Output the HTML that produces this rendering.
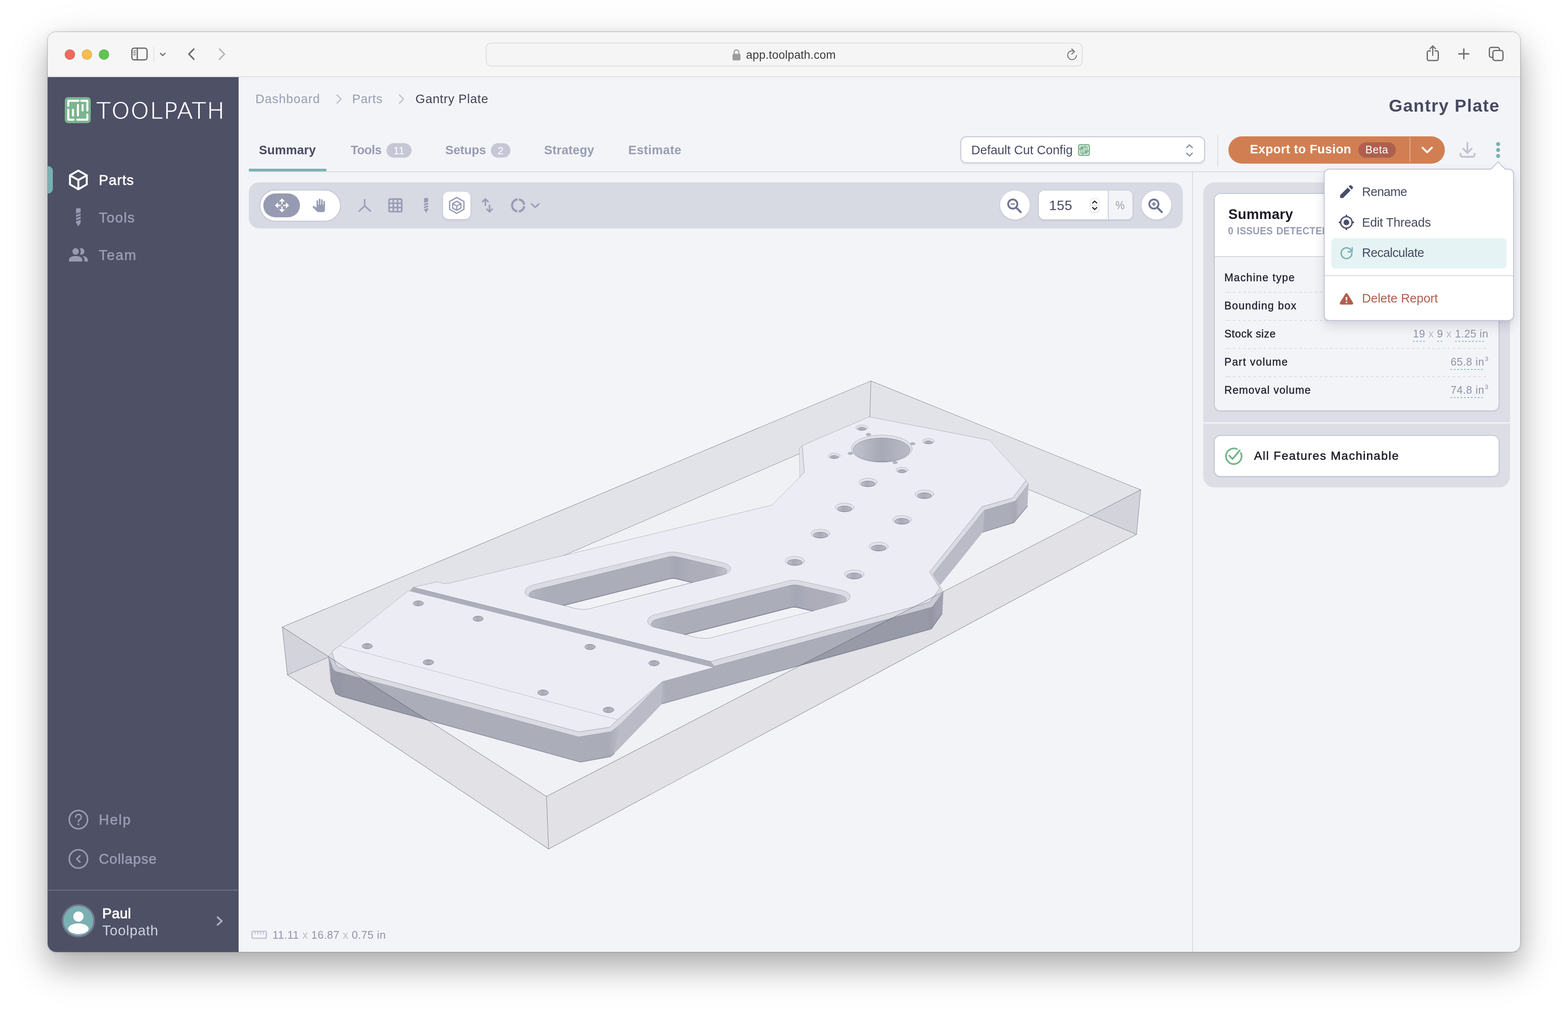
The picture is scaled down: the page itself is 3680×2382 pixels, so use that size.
<!DOCTYPE html>
<html lang="en">
<head>
<meta charset="utf-8">
<title>Toolpath - Gantry Plate</title>
<style>
*{box-sizing:border-box;margin:0;padding:0}
html,body{width:3680px;height:2382px;background:#fff;overflow:hidden}
body{position:relative;font-family:"Liberation Sans","DejaVu Sans",sans-serif;color:#43465c}
.win{position:absolute;left:112px;top:75px;width:3456px;height:2159px;border-radius:20px;overflow:hidden;background:#f3f4f7;
 box-shadow:0 0 0 1px rgba(0,0,0,.24),0 36px 70px rgba(0,0,0,.26),0 30px 120px rgba(0,0,0,.10),0 0 14px rgba(0,0,0,.08)}
.pg{position:absolute;left:-112px;top:-75px;width:3680px;height:2382px;will-change:transform}
.a{position:absolute}
.t{position:absolute;white-space:nowrap;line-height:1}
svg{position:absolute;overflow:visible}
/* browser chrome */
.chrome{left:112px;top:75px;width:3456px;height:106px;background:#f6f6f6;border-bottom:2px solid #dcdcdc}
.tl{width:24px;height:24px;border-radius:50%;top:116px}
.url{left:1140px;top:100px;width:1401px;height:56px;border-radius:13px;background:#f5f5f5;border:2px solid #dedede}
/* sidebar */
.side{left:112px;top:181px;width:448px;height:2054px;background:#4e5066}
.sb{-webkit-text-stroke:.7px currentColor}
.sb2{-webkit-text-stroke:.5px currentColor}
.nav{font-size:33px;letter-spacing:2.2px;color:#989cb3;-webkit-text-stroke:.75px currentColor}
.main{left:560px;top:181px;width:3008px;height:2054px;background:#f3f4f7}
.mut{color:#989cb3}
.tab{font-size:28px;font-weight:bold;color:#989cb3;letter-spacing:.2px}
.badge{height:34px;border-radius:17px;background:#c5c7d6;color:#fff;font-size:24.5px;text-align:center;line-height:35.5px;letter-spacing:.5px}
.row{font-size:25px;font-weight:bold;color:#1f2130;letter-spacing:1.1px}
.val{font-size:25px;color:#8f93ab;letter-spacing:.6px}
.row{font-weight:normal}
.dash{left:2874.5px;width:619px;height:2px;background:repeating-linear-gradient(90deg,#dbdce5 0,#dbdce5 6px,transparent 6px,transparent 12px);background-position:6.5px 0}
.u{padding-bottom:4.8px;background:repeating-linear-gradient(90deg,#84b8b6 0,#84b8b6 4px,transparent 4px,transparent 8px) 0 100%/100% 2.3px no-repeat}
.x{color:#b9bccd}
.val sup{font-size:15px;position:relative;top:-10.6px;vertical-align:baseline;letter-spacing:0;line-height:0;margin-left:1px}
.mi{font-size:29px;color:#474a62;letter-spacing:.1px}
</style>
</head>
<body>
<div class="win"><div class="pg">

<!-- ===== browser chrome ===== -->
<div class="a chrome"></div>
<div class="a tl" style="left:152px;background:#ee6a5f;box-shadow:inset 0 0 0 1px rgba(0,0,0,.12)"></div>
<div class="a tl" style="left:192px;background:#f5bd4f;box-shadow:inset 0 0 0 1px rgba(0,0,0,.12)"></div>
<div class="a tl" style="left:232px;background:#61c454;box-shadow:inset 0 0 0 1px rgba(0,0,0,.12)"></div>
<div class="a url"></div>
<div class="t" id="url" style="left:1751px;top:116.4px;font-size:27px;color:#3c3c3c;letter-spacing:.2px">app.toolpath.com</div>
<svg style="left:0;top:0" width="3680" height="2382" viewBox="0 0 3680 2382" fill="none" stroke-linecap="round" stroke-linejoin="round">
<!-- sidebar toggle -->
<rect x="309.5" y="113" width="35.6" height="27.6" rx="5.5" stroke="#6b6b6b" stroke-width="3"/>
<path d="M322.2 113V140.6" stroke="#6b6b6b" stroke-width="3"/>
<path d="M313.6 119.6H318M313.6 124H318M313.6 128.4H318" stroke="#6b6b6b" stroke-width="2"/>
<path d="M361 110V145.5" stroke="#e2e2e2" stroke-width="2"/>
<path d="M376.8 125.2L382 130.4L387.2 125.2" stroke="#7c7c82" stroke-width="3.2"/>
<path d="M455 115L443.2 127L455 139" stroke="#6a6a6a" stroke-width="3.4"/>
<path d="M515 115L526.8 127L515 139" stroke="#b6b6b6" stroke-width="3.4"/>
<!-- lock -->
<rect x="1719.2" y="126.2" width="18.6" height="15.6" rx="3" fill="#9c9c9c"/>
<path d="M1723 127V122.6a5.5 5.5 0 0 1 11 0V127" stroke="#9c9c9c" stroke-width="2.6"/>
<!-- reload -->
<path d="M2521.5 120.9A10.3 10.3 0 1 0 2526.4 130.3" stroke="#757575" stroke-width="2.2"/>
<path d="M2515.4 115L2521.7 120.9L2515.4 126.8" stroke="#757575" stroke-width="2.4"/>
<!-- share -->
<path d="M3357 119.3H3353.7a4 4 0 0 0 -4 4V138a4 4 0 0 0 4 4H3371.5a4 4 0 0 0 4 -4V123.3a4 4 0 0 0 -4 -4H3368.2" stroke="#6e6e6e" stroke-width="3"/>
<path d="M3362.6 130V108.4M3356.2 114.2L3362.6 107.8L3369 114.2" stroke="#6e6e6e" stroke-width="2.8"/>
<!-- plus -->
<path d="M3423.8 126.4H3447.2M3435.5 114.8V138" stroke="#6e6e6e" stroke-width="3.2"/>
<!-- tabs -->
<path d="M3503.5 134.6H3500a4.5 4.5 0 0 1 -4.500 -4.500V115.800a4.500 4.500 0 0 1 4.500 -4.500H3514.600a4.500 4.500 0 0 1 4.500 4.500V117.500" stroke="#6e6e6e" stroke-width="3"/>
<rect x="3503.8" y="118.500" width="23.6" height="23.600" rx="4.500" stroke="#6e6e6e" stroke-width="3"/>
</svg>

<!-- ===== sidebar ===== -->
<div class="a side"></div>
<div class="a" style="left:112px;top:390px;width:12px;height:64px;background:#7ab0b3;border-radius:0 11px 11px 0"></div>
<div class="a" style="left:152px;top:228px;width:61px;height:61px;border-radius:8px;background:#7cb490"></div>
<svg style="left:0;top:0" width="3680" height="2382" viewBox="0 0 3680 2382" fill="none" stroke-linecap="round" stroke-linejoin="round">
<!-- logo glyph -->
<g stroke="#fff" stroke-width="4.8">
<path d="M160.3 248.600V236.500H184"/><path d="M190.800 236.500H205V259.300"/>
<path d="M160.300 257.300V280.800H172.600"/><path d="M181.400 280.800H205V269"/>
<path d="M171.200 257.600V271"/><path d="M182.900 246.400V271"/><path d="M193.800 246.400V259.300"/>
</g>
<!-- parts cube -->
<g stroke="#fff" stroke-width="4.6">
<path d="M183.900 400.200L203.600 411.600V432.800L183.900 444.200L164.200 432.800V411.600Z"/>
<path d="M164.800 412L183.900 422.600L203 412M183.900 422.600V443.600"/>
</g>
<!-- tools bit -->
<path d="M178.500 491a2.2 2.200 0 0 1 2.200 -2.200h6.400a2.200 2.200 0 0 1 2.200 2.200V522.500L183.900 531.200L178.500 522.500Z" fill="#989cb3" stroke="none"/>
<g stroke="#4e5066" stroke-width="2.5" stroke-linecap="butt"><path d="M177.500 503.300L190.300 498.700"/><path d="M177.500 510.900L190.300 506.300"/><path d="M177.500 518.500L190.300 513.900"/></g>
<!-- team -->
<g fill="#989cb3" stroke="none">
<path d="M190.600 582.500a7.600 7.600 0 0 1 0 15.200a7.500 7.500 0 0 1 -3.300 -.8a10.600 10.600 0 0 0 0 -13.600a7.500 7.500 0 0 1 3.300 -.8z"/>
<path d="M193.500 600.600c7.500 0.600 12.700 4.600 12.700 9.600V613.800H198.200V609.600c0 -3.700 -1.800 -6.800 -4.700 -9z"/>
<circle cx="177.500" cy="590.100" r="7.600"/>
<path d="M161.900 613.800V609.800c0 -5.600 7 -9 15.600 -9s15.600 3.400 15.600 9V613.800Z"/>
</g>
<!-- help -->
<circle cx="184" cy="1923.500" r="21.500" stroke="#989cb3" stroke-width="3.600"/>
<path d="M177.600 1917.800a6.500 6.500 0 1 1 9.600 5.700c-2.200 1.300 -3.200 2.400 -3.200 4.800" stroke="#989cb3" stroke-width="3.400"/>
<circle cx="184" cy="1934.600" r="2.300" fill="#989cb3"/>
<!-- collapse -->
<circle cx="184" cy="2015.800" r="21.500" stroke="#989cb3" stroke-width="3.600"/>
<path d="M187.700 2008.300L180.200 2015.800L187.700 2023.300" stroke="#989cb3" stroke-width="3.600"/>
<!-- chevron user -->
<path d="M510.500 2152.500L520.500 2161.500L510.500 2170.500" stroke="#aeb1c6" stroke-width="3.800"/>
</svg>
<div class="t" id="logo" style="left:225.5px;top:229.5px;font-family:'DejaVu Sans','Liberation Sans',sans-serif;font-weight:200;font-size:52px;color:#fff;letter-spacing:1.2px;line-height:61px;-webkit-text-stroke:.75px #fff;transform:scaleX(1.07);transform-origin:0 0">TOOLPATH</div>
<div class="t nav" id="nparts" style="left:232px;top:406px;color:#fff;letter-spacing:1.2px">Parts</div>
<div class="t nav" id="ntools" style="left:232px;top:494px;letter-spacing:1.7px">Tools</div>
<div class="t nav" id="nteam" style="left:232px;top:582px">Team</div>
<div class="t nav" id="nhelp" style="left:232px;top:1907px">Help</div>
<div class="t nav" id="ncoll" style="left:232px;top:1999px;letter-spacing:1px">Collapse</div>
<div class="a" style="left:112px;top:2088px;width:448px;height:2px;background:#6f7289"></div>
<div class="a" style="left:145px;top:2122px;width:78px;height:78px;border-radius:50%;background:#7ab0b3;border:4px solid #73768f;overflow:hidden">
 <div class="a" style="left:23px;top:13px;width:24px;height:24px;border-radius:50%;background:#fff"></div>
 <div class="a" style="left:11px;top:41px;width:48px;height:25px;border-radius:50%;background:#fff"></div>
</div>
<div class="t" id="paul" class="sb" style="left:240px;top:2127px;font-size:33px;color:#fff;letter-spacing:.4px;-webkit-text-stroke:1px #fff">Paul</div>
<div class="t" id="tpath" style="left:240px;top:2167px;font-size:33px;color:#cfd1de;letter-spacing:.9px">Toolpath</div>


<!-- ===== main ===== -->
<div class="t mut" id="bc1" style="left:599.5px;top:217.72px;font-size:29px;letter-spacing:1.12px">Dashboard</div>
<div class="t mut" id="bc2" style="left:826.5px;top:217.72px;font-size:29px;letter-spacing:.8px">Parts</div>
<div class="t" id="bc3" style="left:975px;top:217.72px;font-size:29px;letter-spacing:.85px;color:#3f4257">Gantry Plate</div>
<div class="t" id="title" style="left:3259.5px;top:227.65px;font-size:41px;font-weight:bold;letter-spacing:1.57px;color:#474a62">Gantry Plate</div>
<div class="t tab" id="tb1" style="left:607.8px;top:337.62px;font-size:29px;color:#474a62">Summary</div>
<div class="t tab" id="tb2" style="left:823px;top:337.62px;font-size:29px;letter-spacing:-.6px">Tools</div>
<div class="a badge" style="left:907px;top:336px;width:59px">11</div>
<div class="t tab" id="tb3" style="left:1045px;top:337.62px;font-size:29px;letter-spacing:-.2px">Setups</div>
<div class="a badge" style="left:1152px;top:336px;width:46px">2</div>
<div class="t tab" id="tb4" style="left:1277px;top:337.62px;font-size:29px">Strategy</div>
<div class="t tab" id="tb5" style="left:1474.6px;top:337.62px;font-size:29px;letter-spacing:.5px">Estimate</div>
<div class="a" style="left:584px;top:402px;width:2960px;height:2px;background:#d9dbe4"></div>
<div class="a" style="left:584px;top:396px;width:182px;height:6px;background:#7ab0b3"></div>
<div class="a" style="left:2254px;top:320px;width:574px;height:63px;border-radius:14px;background:#fff;border:2px solid #c3c5d7;box-shadow:0 2px 4px rgba(60,64,100,.10)"></div>
<div class="t" id="sel" style="left:2279.6px;top:337.72px;font-size:29px;letter-spacing:.06px;color:#474a62">Default Cut Config</div>
<div class="a" style="left:2857px;top:316px;width:2px;height:75px;background:#d9dbe4"></div>
<div class="a" style="left:2883px;top:320px;width:508px;height:64px;border-radius:32px;background:#d17f52"></div>
<div class="a" style="left:3308px;top:322px;width:2px;height:59px;background:rgba(255,255,255,.35)"></div>
<div class="t" id="exp" style="left:2933.5px;top:336.02px;font-size:29px;font-weight:bold;letter-spacing:.48px;color:#fff">Export to Fusion</div>
<div class="a" style="left:3188px;top:334px;width:88px;height:36px;border-radius:18px;background:#ae5f4e"></div><div class="t" id="beta" style="left:3204.5px;top:339.14px;font-size:25px;letter-spacing:.57px;color:#fff">Beta</div>
<svg style="left:0;top:0" width="3680" height="2382" viewBox="0 0 3680 2382" fill="none" stroke-linecap="round" stroke-linejoin="round">
<path d="M791 223L800.500 232.500L791 242" stroke="#c3c5d7" stroke-width="3.200"/>
<path d="M937.500 223L947 232.500L937.500 242" stroke="#c3c5d7" stroke-width="3.200"/>
<!-- select mini logo -->
<rect x="2530.200" y="338.200" width="27.700" height="27.600" rx="4.200" fill="#7cb490"/>
<g stroke="#fff" stroke-width="2.100" stroke-linecap="round"><path d="M2534.300 347.600V342.300H2544.500M2547.800 342.300H2553.800V352.500M2534.300 351.800V361.700H2539.600M2543.600 361.700H2553.800V356.600M2539.100 351.800V357.600M2544.100 346.600V357.600M2548.900 346.600V352.500"/></g>
<path d="M2785 346.500L2791.600 340L2798.200 346.500M2785 359.500L2791.600 366L2798.200 359.500" stroke="#8c90a8" stroke-width="3"/>
<path d="M3338.500 346.500L3349.500 357.500L3360.500 346.500" stroke="#fff" stroke-width="4.400"/>
<!-- download -->
<path d="M3443.900 333.300V357.500" stroke="#c3c5d5" stroke-width="4.200" stroke-linecap="butt"/>
<path d="M3432.800 347.800L3443.900 358.900L3455 347.800" stroke="#c3c5d5" stroke-width="4.400" stroke-linecap="butt" stroke-linejoin="miter"/>
<path d="M3427.700 359V364a4 4 0 0 0 4 4H3456.600a4 4 0 0 0 4 -4V359" stroke="#c3c5d5" stroke-width="4.400" stroke-linecap="butt"/>
<circle cx="3516" cy="338.100" r="4.700" fill="#7ab0b3"/><circle cx="3516" cy="352" r="4.700" fill="#7ab0b3"/><circle cx="3516" cy="366" r="4.700" fill="#7ab0b3"/>
</svg>

<div class="a" style="left:584px;top:428px;width:2192px;height:108px;border-radius:24px;background:#d7d9e3"></div>
<div class="a" style="left:608.500px;top:444.500px;width:191px;height:75px;border-radius:38px;background:#fff;border:2px solid #c3c5d6"></div>
<div class="a" style="left:618px;top:454px;width:86px;height:56px;border-radius:28px;background:#979bb1"></div>
<div class="a" style="left:1040px;top:450px;width:64px;height:64px;border-radius:13px;background:#fff;box-shadow:0 3px 6px rgba(70,74,110,.12)"></div>
<div class="a" style="left:2345.500px;top:445.500px;width:72.500px;height:70px;border-radius:50%;background:#fff;border:1.500px solid #c9cbda;box-shadow:0 2px 3px rgba(70,74,110,.10)"></div>
<div class="a" style="left:2677.500px;top:445.500px;width:72.500px;height:70px;border-radius:50%;background:#fff;border:1.500px solid #c9cbda;box-shadow:0 2px 3px rgba(70,74,110,.10)"></div>
<div class="a" style="left:2438px;top:446.500px;width:220px;height:68.500px;border-radius:13px;background:#fff;box-shadow:0 2px 4px rgba(70,74,110,.16),0 0 0 1px rgba(150,154,180,.25);overflow:hidden">
 <div class="a" style="left:162px;top:0;width:58px;height:69px;background:#f3f4f7;border-left:2px solid #c9cbda"></div>
</div>
<div class="t" id="z155" style="left:2462px;top:465.500px;font-size:32px;letter-spacing:.4px;color:#474a62">155</div>
<div class="t" id="zpct" style="left:2618px;top:467.500px;font-size:28px;color:#989cb3;transform:scaleX(.86);transform-origin:0 0">%</div>
<div class="a" style="left:2557.500px;top:465.500px;width:22.600px;height:32.500px;border-radius:6px;background:#fff;border:1px solid #d9d9d9;box-shadow:0 1px 1px rgba(0,0,0,.08)"></div>
<div class="a" style="left:2558.500px;top:481.200px;width:20.600px;height:1.400px;background:#dedede"></div>
<svg style="left:0;top:0" width="3680" height="2382" viewBox="0 0 3680 2382" fill="none" stroke-linecap="round" stroke-linejoin="round">
<!-- move icon -->
<g fill="#fff" stroke="none">
<path d="M661.800 465.400L668.700 472.800H654.900Z"/><path d="M661.800 498.600L668.700 491.200H654.900Z"/>
<path d="M645.200 482L652.600 475.100V488.900Z"/><path d="M678.400 482L671 475.100V488.900Z"/>
</g>
<path d="M661.800 472.500V479.300M661.800 484.700V491.500M652.300 482H659.100M664.500 482H671.300" stroke="#fff" stroke-width="2.900" stroke-linecap="butt"/>
<!-- hand -->
<g fill="#989cb3" stroke="none">
<rect x="742.900" y="470" width="3.700" height="14" rx="1.850"/>
<rect x="748.200" y="466" width="3.700" height="18" rx="1.850"/>
<rect x="753.500" y="467.700" width="3.700" height="16" rx="1.850"/>
<rect x="758.800" y="471.500" width="3.800" height="14" rx="1.900"/>
<path d="M742.900 480.500H762.600V493.300a4.500 4.500 0 0 1 -4.500 4.500H747.300a5 5 0 0 1 -3.400 -1.400L734.300 486.400a2 2 0 0 1 2.600 -3L742.900 487Z"/>
</g>
<!-- axis -->
<path d="M855.900 467.200V483M855.900 483L841.800 496.600M855.900 483L870.400 496.600" stroke="#989cb3" stroke-width="3.400" stroke-linecap="butt"/>
<!-- grid -->
<g stroke="#989cb3" stroke-width="3.600" stroke-linecap="butt"><rect x="913.100" y="467.100" width="29.700" height="29.600" rx="2.500"/>
<path d="M923 467V497M933 467V497M913 477H943M913 487H943"/></g>
<path d="M995.3 466.3a1.9 1.9 0 0 1 1.9 -1.9h5.6a1.9 1.9 0 0 1 1.9 1.9V491.9L1000.0 499.2L995.3 491.9Z" fill="#989cb3" stroke="none"/><g stroke="#d7d9e3" stroke-width="2.1" stroke-linecap="butt"><path d="M994.3 477.8L1005.7 474.3"/><path d="M994.3 484.1L1005.7 480.5"/><path d="M994.3 490.4L1005.7 486.8"/></g>
<!-- cube in hex -->
<g stroke="#989cb3" stroke-width="3">
<path d="M1072 463.400L1088.800 473V491.200L1072 500.800L1055.200 491.200V473Z"/>
<path d="M1072 472.400L1081.600 477.900V488.400L1072 493.600L1062.400 488.400V477.900Z"/>
<path d="M1062.800 478.200L1072 483.400L1081.200 478.200M1072 483.400V493.200" stroke-width="2.800"/>
</g>
<!-- up/down -->
<path d="M1139.100 483V467M1131.800 474.200L1139.100 466.900L1146.400 474.200M1148.800 480.600V497M1141.500 489.900L1148.800 497.200L1156.100 489.900" stroke="#989cb3" stroke-width="3.400" stroke-linecap="butt" stroke-linejoin="miter"/>
<!-- circle segments -->
<circle cx="1216.100" cy="482.100" r="14.300" stroke="#989cb3" stroke-width="5" stroke-dasharray="18.860 3.600 18.860 3.600 41.320 3.600" stroke-dashoffset="-1.800" stroke-linecap="butt" transform="rotate(-90 1216.100 482.100)"/>
<path d="M1247.500 478.500L1256.100 486.600L1264.700 478.500" stroke="#989cb3" stroke-width="3.400"/>
<!-- zoom icons -->
<circle cx="2376.9" cy="478.9" r="10.800" stroke="#6f738e" stroke-width="4.200"/><path d="M2385.7 487.9L2396.9 499.1" stroke="#6f738e" stroke-width="4.800" stroke-linecap="butt"/><path d="M2371.9 478.9H2381.9" stroke="#6f738e" stroke-width="2.600" stroke-linecap="butt"/><circle cx="2708.1" cy="478.9" r="10.800" stroke="#6f738e" stroke-width="4.200"/><path d="M2716.9 487.9L2728.1 499.1" stroke="#6f738e" stroke-width="4.800" stroke-linecap="butt"/><path d="M2703.1 478.9H2713.1" stroke="#6f738e" stroke-width="2.600" stroke-linecap="butt"/><path d="M2708.1 473.9V483.9" stroke="#6f738e" stroke-width="2.600" stroke-linecap="butt"/>
<path d="M2564.300 476.600L2569.200 471.900L2574.100 476.600M2564.300 487L2569.200 491.700L2574.100 487" stroke="#222" stroke-width="2.600"/>
<!-- ruler -->
<rect x="591.500" y="2185.500" width="33.500" height="16.500" rx="2.500" stroke="#c3c5d7" stroke-width="3.200"/>
<path d="M598.500 2186V2193M605 2186V2193M611.500 2186V2193M618 2186V2193" stroke="#c3c5d7" stroke-width="2.400" stroke-linecap="butt"/>
</svg>
<div class="t" id="dims" style="left:639.4px;top:2181.600px;font-size:25.500px;letter-spacing:.52px;color:#8f93ab">11.11 <span style="color:#b9bccd">x</span> 16.87 <span style="color:#b9bccd">x</span> 0.75 in</div>
<div class="a" style="left:2798px;top:404px;width:2px;height:1830px;background:#d9dbe4"></div>
<!--MODEL_START-->
<svg style="left:0;top:0" width="3680" height="2382" viewBox="0 0 3680 2382" stroke-linejoin="round" stroke-linecap="round">
<defs>
<linearGradient id="hg" x1="0" x2="1" y1="0" y2="0"><stop offset="0" stop-color="#bfc1cb"/><stop offset=".42" stop-color="#a7a9b6"/><stop offset="1" stop-color="#b9bbc6"/></linearGradient>
<linearGradient id="bh" x1="0" x2="1" y1="0" y2="0"><stop offset="0" stop-color="#c0c2cc"/><stop offset=".5" stop-color="#a7a9b6"/><stop offset="1" stop-color="#b9bbc6"/></linearGradient>
<linearGradient id="sw1" x1="0" x2="1" y1="0" y2="0"><stop offset="0" stop-color="#b4b6c2"/><stop offset=".09" stop-color="#abadb9"/><stop offset=".70" stop-color="#abadb9"/><stop offset=".745" stop-color="#a5a7b4"/><stop offset=".80" stop-color="#adadba"/><stop offset=".93" stop-color="#aeaebb"/><stop offset="1" stop-color="#c0c1cb"/></linearGradient>
</defs>
<polygon points="674.5,1583.8 2041.0,993.7 2667.3,1254.0 1287.5,1992.5" fill="rgba(24,28,56,0.012)"/>
<polygon points="662.5,1471.5 2044.0,894.0 2041.0,993.7 674.5,1583.8" fill="rgba(24,28,56,0.075)"/>
<polygon points="2044.0,894.0 2677.3,1149.5 2667.3,1254.0 2041.0,993.7" fill="rgba(24,28,56,0.075)"/>
<polyline points="674.5,1583.8 2041.0,993.7 2667.3,1254.0" fill="none" stroke="rgba(60,62,76,0.56)" stroke-width="1.0"/>
<polyline points="2044.0,894.0 2041.0,993.7" fill="none" stroke="rgba(60,62,76,0.56)" stroke-width="1.0"/>
<linearGradient id="gL" gradientUnits="userSpaceOnUse" x1="770" x2="1460" y1="0" y2="0"><stop offset="0" stop-color="#b9bbc6"/><stop offset=".012" stop-color="#a9abb7"/><stop offset=".04" stop-color="#a8aab6"/><stop offset=".06" stop-color="#abadb9"/><stop offset=".85" stop-color="#abadb9"/><stop offset=".955" stop-color="#a9abb7"/><stop offset=".975" stop-color="#b2b4c0"/><stop offset="1" stop-color="#b9bbc6"/></linearGradient>
<polygon points="770.5,1540.0 781.8,1570.0 787.3,1575.5 1358.0,1729.3 1434.0,1717.0 1456.6,1699.4 1441.6,1768.0 1432.7,1775.5 1362.4,1788.4 799.7,1633.7 787.8,1627.8 775.8,1595.0" fill="url(#gL)"/>
<polyline points="775.8,1595.0 787.8,1627.8 799.7,1633.7 1362.4,1788.4 1432.7,1775.5 1441.6,1768.0" fill="none" stroke="#8e90a0" stroke-width="1.8"/>
<polygon points="1456.6,1699.4 1555.0,1599.4 1553.6,1651.6 1441.6,1768.0" fill="#b9bbc6" stroke="#b9bbc6" stroke-width="1"/>
<linearGradient id="gR" gradientUnits="userSpaceOnUse" x1="1553" x2="2214" y1="0" y2="0"><stop offset="0" stop-color="#b5b7c2"/><stop offset=".012" stop-color="#abadb9"/><stop offset=".94" stop-color="#abadb9"/><stop offset=".958" stop-color="#a5a7b4"/><stop offset=".975" stop-color="#b0b2be"/><stop offset="1" stop-color="#b4b6c1"/></linearGradient>
<polygon points="1555.0,1599.4 1675.5,1566.3 1676.3,1563.5 2188.0,1424.6 2213.6,1388.7 2211.0,1440.0 2185.5,1476.0 1553.6,1651.6" fill="url(#gR)" stroke="#abadb9" stroke-width="1"/>
<polyline points="1553.6,1651.6 2185.5,1476.0 2211.0,1440.0" fill="none" stroke="#8e90a0" stroke-width="1.8"/>
<polygon points="2310.4,1197.3 2306.0,1249.0 2206.4,1372.7 2189.6,1347.5" fill="#b9bbc6" stroke="#b9bbc6" stroke-width="1"/>
<linearGradient id="gQ" gradientUnits="userSpaceOnUse" x1="2306" x2="2414" y1="0" y2="0"><stop offset="0" stop-color="#b3b5c0"/><stop offset=".05" stop-color="#abadb9"/><stop offset=".62" stop-color="#abadb9"/><stop offset=".7" stop-color="#a6a8b5"/><stop offset=".78" stop-color="#b4b6c2"/><stop offset="1" stop-color="#b8bac5"/></linearGradient>
<polygon points="2310.4,1197.3 2383.0,1175.8 2414.0,1135.5 2411.3,1187.8 2379.0,1226.6 2306.0,1249.0" fill="url(#gQ)"/>
<polyline points="2306.0,1249.0 2379.0,1226.6 2411.3,1187.8" fill="none" stroke="#8e90a0" stroke-width="1.8"/>
<polygon points="779.0,1529.0 789.0,1561.0 794.5,1566.0 1358.0,1717.3 1431.0,1706.5 1449.0,1689.0 1555.0,1599.4 1456.6,1699.4 1434.0,1717.0 1358.0,1729.3 787.3,1575.5 781.8,1570.0 770.5,1540.0 796.5,1515.6" fill="#dadbe3" stroke="rgba(86,90,108,0.46)" stroke-width="0.8"/>
<polygon points="1667.5,1552.3 2181.8,1413.6 2205.5,1380.0 2181.7,1342.2 2304.5,1189.3 2376.7,1168.4 2407.5,1127.5 2414.0,1135.5 2383.0,1175.8 2310.4,1197.3 2189.6,1347.5 2213.6,1388.7 2188.0,1424.6 1676.3,1563.5" fill="#dadbe3" stroke="rgba(86,90,108,0.46)" stroke-width="0.8"/>
<polygon points="1876.0,1052.0 1882.8,1046.0 1887.9,1108.7 1877.5,1120.6" fill="#e3e4eb" stroke="rgba(86,90,108,0.46)" stroke-width="0.8"/>
<polygon points="956.4,1388.2 962.1,1386.8 1675.5,1566.3 1555.0,1599.4 1449.0,1689.0 1431.0,1706.5 1358.0,1717.3 794.5,1566.0 789.0,1561.0 779.0,1529.0 796.5,1515.6" fill="#ecedf4" stroke="rgba(86,90,108,0.46)" stroke-width="0.8"/>
<polyline points="796.5,1515.6 1449.0,1689.0" fill="none" stroke="rgba(86,90,108,0.46)" stroke-width="0.8"/>
<polygon points="970.0,1378.3 1667.5,1552.3 1676.3,1563.5 1675.5,1566.3 962.1,1386.8" fill="#acaebb" stroke="#acaebb" stroke-width="1"/>
<path d="M2040.3 978.3L2322.4 1033.1L2407.5 1127.5L2376.7 1168.4L2304.5 1189.3L2181.7 1342.2L2205.5 1380L2181.8 1413.6L1667.5 1552.3L970 1378.3L1020 1366.7Q1030 1364.5 1036 1367.8Q1042 1371 1052 1369.3L1811.800 1185.400L1887.900 1108.700L1882.800 1046Z" fill="#ecedf4" stroke="rgba(86,90,108,0.46)" stroke-width="0.9"/>
<path d="M1232.2 1390.3Q1232 1378 1250.2 1372.8L1564.5 1296.9Q1578.5 1293.5 1597.2 1297.6L1695.3 1320.2Q1716 1326 1714.7 1335.4Q1714 1344 1700 1348.3L1382.2 1428.9Q1363.6 1433 1330.8 1423L1246.7 1402Q1232.5 1398 1232.2 1390.3Z" fill="#dadbe3" stroke="rgba(86,90,108,0.46)" stroke-width="0.8"/>
<path d="M1241.6 1397.3Q1240.500 1389 1256 1384.5L1569 1307Q1578.5 1304.5 1592.5 1307.4L1693 1331.2Q1707 1335 1706.5 1340Q1706 1345 1700 1348.3L1624 1367L1587.9 1358.3Q1579.7 1356.3 1571.5 1358.3L1322.7 1420.7L1246.7 1402Q1242 1400.500 1241.6 1397.3Z" fill="url(#sw1)" stroke="rgba(86,90,108,0.45)" stroke-width="0.8"/>
<path d="M1322.7 1420.7L1571.5 1358.3Q1579.7 1356.3 1587.9 1358.3L1624 1367L1382.2 1428.9Q1363.6 1433 1330.8 1423Z" fill="#f1f2f6"/>
<path d="M1624 1367L1382.2 1428.9Q1363.6 1433 1330.8 1423L1322.700 1420.700" fill="none" stroke="rgba(86,90,108,0.46)" stroke-width="0.8"/>
<path d="M1322.7 1420.7L1571.5 1358.3Q1579.7 1356.3 1587.9 1358.3L1624 1367" fill="none" stroke="#85879a" stroke-width="2"/>
<path d="M1519.7 1458.5Q1519.500 1446.500 1538.4 1442.1L1851.5 1362.7Q1865.5 1359.800 1881.9 1363.9L1975.3 1384.9Q1996.500 1390.500 1995.2 1400.1Q1994.500 1409 1982.3 1412.9L1667 1497Q1648.2 1501.200 1615.5 1491.2L1533.7 1471.4Q1520 1467 1519.7 1458.5Z" fill="#dadbe3" stroke="rgba(86,90,108,0.46)" stroke-width="0.8"/>
<path d="M1528.6 1465.5Q1527.500 1457 1543 1452.7L1853.8 1373.9Q1865.5 1371 1877.2 1373.9L1973 1396.6Q1987 1401 1986.5 1407.1Q1986.500 1410.500 1982.3 1412.9L1907.6 1434L1872.5 1425.8Q1863.2 1423.500 1853.8 1426.3L1607.3 1489.200L1533.7 1471.4Q1529 1469.500 1528.6 1465.5Z" fill="url(#sw1)" stroke="rgba(86,90,108,0.45)" stroke-width="0.8"/>
<path d="M1607.3 1489.200L1853.8 1426.3Q1863.2 1423.500 1872.5 1425.8L1907.6 1434L1667 1497Q1648.2 1501.200 1615.5 1491.2Z" fill="#f1f2f6"/>
<path d="M1907.6 1434L1667 1497Q1648.2 1501.200 1615.5 1491.2L1607.300 1489.200" fill="none" stroke="rgba(86,90,108,0.46)" stroke-width="0.8"/>
<path d="M1607.3 1489.200L1853.8 1426.3Q1863.2 1423.500 1872.5 1425.8L1907.6 1434" fill="none" stroke="#85879a" stroke-width="2"/>
<ellipse cx="981.7" cy="1416.0" rx="11.9" ry="6.1" fill="url(#hg)" stroke="rgba(84,86,100,0.75)" stroke-width="0.9"/>
<ellipse cx="1122.0" cy="1452.0" rx="12.0" ry="6.2" fill="url(#hg)" stroke="rgba(84,86,100,0.75)" stroke-width="0.9"/>
<ellipse cx="1384.8" cy="1518.3" rx="12.2" ry="6.3" fill="url(#hg)" stroke="rgba(84,86,100,0.75)" stroke-width="0.9"/>
<ellipse cx="1535.0" cy="1556.4" rx="12.4" ry="6.3" fill="url(#hg)" stroke="rgba(84,86,100,0.75)" stroke-width="0.9"/>
<ellipse cx="861.8" cy="1516.4" rx="12.2" ry="6.3" fill="url(#hg)" stroke="rgba(84,86,100,0.75)" stroke-width="0.9"/>
<ellipse cx="1005.4" cy="1554.3" rx="12.4" ry="6.3" fill="url(#hg)" stroke="rgba(84,86,100,0.75)" stroke-width="0.9"/>
<ellipse cx="1274.5" cy="1625.5" rx="12.6" ry="6.5" fill="url(#hg)" stroke="rgba(84,86,100,0.75)" stroke-width="0.9"/>
<ellipse cx="1428.0" cy="1666.0" rx="12.7" ry="6.5" fill="url(#hg)" stroke="rgba(84,86,100,0.75)" stroke-width="0.9"/>
<ellipse cx="2037.3" cy="1132.2" rx="21.5" ry="10.0" fill="#e1e2ea" stroke="rgba(86,90,108,0.46)" stroke-width="0.8"/>
<ellipse cx="2037.3" cy="1135.5" rx="16.4" ry="6.6" fill="url(#hg)" stroke="rgba(84,86,100,0.75)" stroke-width="0.8"/>
<ellipse cx="2169.6" cy="1160.0" rx="21.7" ry="10.1" fill="#e1e2ea" stroke="rgba(86,90,108,0.46)" stroke-width="0.8"/>
<ellipse cx="2169.6" cy="1163.3" rx="16.5" ry="6.7" fill="url(#hg)" stroke="rgba(84,86,100,0.75)" stroke-width="0.8"/>
<ellipse cx="1982.4" cy="1190.9" rx="21.9" ry="10.2" fill="#e1e2ea" stroke="rgba(86,90,108,0.46)" stroke-width="0.8"/>
<ellipse cx="1982.4" cy="1194.3" rx="16.7" ry="6.7" fill="url(#hg)" stroke="rgba(84,86,100,0.75)" stroke-width="0.8"/>
<ellipse cx="2116.9" cy="1220.0" rx="22.1" ry="10.3" fill="#e1e2ea" stroke="rgba(86,90,108,0.46)" stroke-width="0.8"/>
<ellipse cx="2116.9" cy="1223.4" rx="16.8" ry="6.8" fill="url(#hg)" stroke="rgba(84,86,100,0.75)" stroke-width="0.8"/>
<ellipse cx="1925.5" cy="1252.4" rx="22.3" ry="10.4" fill="#e1e2ea" stroke="rgba(86,90,108,0.46)" stroke-width="0.8"/>
<ellipse cx="1925.5" cy="1255.8" rx="17.0" ry="6.8" fill="url(#hg)" stroke="rgba(84,86,100,0.75)" stroke-width="0.8"/>
<ellipse cx="2062.2" cy="1282.7" rx="22.5" ry="10.5" fill="#e1e2ea" stroke="rgba(86,90,108,0.46)" stroke-width="0.8"/>
<ellipse cx="2062.2" cy="1286.1" rx="17.1" ry="6.9" fill="url(#hg)" stroke="rgba(84,86,100,0.75)" stroke-width="0.8"/>
<ellipse cx="1865.5" cy="1316.4" rx="22.7" ry="10.6" fill="#e1e2ea" stroke="rgba(86,90,108,0.46)" stroke-width="0.8"/>
<ellipse cx="1865.5" cy="1319.9" rx="17.3" ry="7.0" fill="url(#hg)" stroke="rgba(84,86,100,0.75)" stroke-width="0.8"/>
<ellipse cx="2005.0" cy="1348.2" rx="22.9" ry="10.7" fill="#e1e2ea" stroke="rgba(86,90,108,0.46)" stroke-width="0.8"/>
<ellipse cx="2005.0" cy="1351.7" rx="17.5" ry="7.0" fill="url(#hg)" stroke="rgba(84,86,100,0.75)" stroke-width="0.8"/>
<ellipse cx="2022.7" cy="1003.7" rx="14.2" ry="6.4" fill="#e1e2ea" stroke="rgba(86,90,108,0.46)" stroke-width="0.8"/>
<ellipse cx="2022.7" cy="1006.4" rx="9.8" ry="3.6" fill="url(#hg)" stroke="rgba(84,86,100,0.75)" stroke-width="0.7"/>
<ellipse cx="1957.8" cy="1069.8" rx="14.2" ry="6.4" fill="#e1e2ea" stroke="rgba(86,90,108,0.46)" stroke-width="0.8"/>
<ellipse cx="1957.8" cy="1072.5" rx="9.8" ry="3.6" fill="url(#hg)" stroke="rgba(84,86,100,0.75)" stroke-width="0.7"/>
<ellipse cx="2117.0" cy="1103.0" rx="14.2" ry="6.4" fill="#e1e2ea" stroke="rgba(86,90,108,0.46)" stroke-width="0.8"/>
<ellipse cx="2117.0" cy="1105.7" rx="9.8" ry="3.6" fill="url(#hg)" stroke="rgba(84,86,100,0.75)" stroke-width="0.7"/>
<ellipse cx="2179.0" cy="1035.5" rx="14.2" ry="6.4" fill="#e1e2ea" stroke="rgba(86,90,108,0.46)" stroke-width="0.8"/>
<ellipse cx="2179.0" cy="1038.2" rx="9.8" ry="3.6" fill="url(#hg)" stroke="rgba(84,86,100,0.75)" stroke-width="0.7"/>
<ellipse cx="2038.2" cy="1019.6" rx="5.6" ry="3.0" fill="#b4b6c2" stroke="rgba(86,90,108,0.46)" stroke-width="0.7"/>
<ellipse cx="2142.0" cy="1041.2" rx="5.6" ry="3.0" fill="#b4b6c2" stroke="rgba(86,90,108,0.46)" stroke-width="0.7"/>
<ellipse cx="1995.7" cy="1064.0" rx="5.6" ry="3.0" fill="#b4b6c2" stroke="rgba(86,90,108,0.46)" stroke-width="0.7"/>
<ellipse cx="2100.6" cy="1085.5" rx="5.6" ry="3.0" fill="#b4b6c2" stroke="rgba(86,90,108,0.46)" stroke-width="0.7"/>
<ellipse cx="2069.3" cy="1053.0" rx="71.5" ry="32.0" fill="#e1e2ea" stroke="rgba(86,90,108,0.46)" stroke-width="0.9"/>
<ellipse cx="2068.9" cy="1055.7" rx="66.9" ry="28.0" fill="url(#bh)" stroke="rgba(86,90,108,0.5)" stroke-width="0.9"/>
<path d="M2042 1081.300Q2069 1087.500 2100 1080.800Q2069 1083.500 2042 1081.300Z" fill="#8f91a1"/>
<clipPath id="cw"><polygon points="662.5,1471.5 1282.5,1869.0 1287.5,1992.5 674.5,1583.8"/><polygon points="1282.5,1869.0 2677.3,1149.5 2667.3,1254.0 1287.5,1992.5"/></clipPath>
<g clip-path="url(#cw)" fill="rgba(24,28,56,0.05)">
<polygon points="770.5,1540.0 781.8,1570.0 787.3,1575.5 1358.0,1729.3 1434.0,1717.0 1456.6,1699.4 1441.6,1768.0 1432.7,1775.5 1362.4,1788.4 799.7,1633.7 787.8,1627.8 775.8,1595.0"/>
<polygon points="1555.0,1599.4 1675.5,1566.3 1676.3,1563.5 2188.0,1424.6 2213.6,1388.7 2211.0,1440.0 2185.5,1476.0 1553.6,1651.6"/>
</g>
<polygon points="662.5,1471.5 1282.5,1869.0 1287.5,1992.5 674.5,1583.8" fill="rgba(24,28,56,0.075)"/>
<polygon points="1282.5,1869.0 2677.3,1149.5 2667.3,1254.0 1287.5,1992.5" fill="rgba(24,28,56,0.075)"/>
<polyline points="662.5,1471.5 2044.0,894.0 2677.3,1149.5 1282.5,1869.0 662.5,1471.5" fill="none" stroke="rgba(60,62,76,0.56)" stroke-width="1.05"/>
<polyline points="662.5,1471.5 674.5,1583.8 1287.5,1992.5 2667.3,1254.0 2677.3,1149.5" fill="none" stroke="rgba(60,62,76,0.56)" stroke-width="1.05"/>
<polyline points="1282.5,1869.0 1287.5,1992.5" fill="none" stroke="rgba(60,62,76,0.56)" stroke-width="1.05"/>
</svg>
<!--MODEL_END-->

<div class="a" style="left:2824px;top:428px;width:720px;height:716px;border-radius:26px;background:#dddee5"></div>
<div class="a" style="left:2824px;top:991px;width:720px;height:3px;background:#f3f4f7"></div>
<div class="a" style="left:2849px;top:452.500px;width:670px;height:512.500px;border-radius:15px;background:#f3f4f7;border:2px solid #c3c5d7;overflow:hidden;box-shadow:0 1px 3px rgba(70,74,110,.10)">
 <div class="a" style="left:0;top:0;width:670px;height:148px;background:#fff;border-bottom:2px solid #d3d5e0"></div>
</div>
<div class="t" id="psum" style="left:2882.8px;top:486.29px;font-size:33px;font-weight:bold;letter-spacing:.25px;color:#1c1d29">Summary</div>
<div class="t" id="piss" style="left:2881.500px;top:529.65px;font-size:24.5px;font-weight:bold;letter-spacing:.3px;word-spacing:1.6px;color:#989cb3;transform:scaleX(.922);transform-origin:0 0">0 ISSUES DETECTED</div>
<div class="t row sb2" id="r1" style="left:2873.500px;top:639.24px;letter-spacing:1.45px">Machine type</div>
<div class="t row sb2" id="r2" style="left:2873.500px;top:705.19px;letter-spacing:1.45px">Bounding box</div>
<div class="t row sb2" id="r3" style="left:2873.500px;top:771.14px;letter-spacing:.7px">Stock size</div>
<div class="t row sb2" id="r4" style="left:2873.500px;top:837.09px;letter-spacing:1.5px">Part volume</div>
<div class="t row sb2" id="r5" style="left:2873.500px;top:903.04px;letter-spacing:1.25px">Removal volume</div>
<div class="a dash" style="top:684.9px"></div><div class="a dash" style="top:750.85px"></div><div class="a dash" style="top:816.8px"></div><div class="a dash" style="top:882.75px"></div>
<div class="t val" id="v3" style="right:187px;top:771.14px;letter-spacing:.46px"><span class="u">19</span> <span class="x">x</span> <span class="u">9</span> <span class="x">x</span> <span class="u" style="background-size:calc(100% - 6px) 2.3px">1.25 in</span></div>
<div class="t val" id="v4" style="right:187px;top:837.09px"><span class="u">65.8 in</span><sup>3</sup></div>
<div class="t val" id="v5" style="right:187px;top:903.04px"><span class="u">74.8 in</span><sup>3</sup></div>
<div class="a" style="left:2849px;top:1021px;width:670px;height:98px;border-radius:15px;background:#fff;border:2px solid #c3c5d7;box-shadow:0 1px 3px rgba(70,74,110,.10)"></div>
<div class="t sb" id="afm" style="left:2943.2px;top:1056.25px;font-size:28px;letter-spacing:1.76px;color:#1c1d29">All Features Machinable</div>
<svg style="left:0;top:0" width="3680" height="2382" viewBox="0 0 3680 2382" fill="none" stroke-linecap="round" stroke-linejoin="round">
<path d="M2912.200 1063A18.300 18.300 0 1 1 2903 1054" stroke="#76b48c" stroke-width="4"/>
<path d="M2885.300 1069.500L2892.600 1077.200L2909.600 1057" stroke="#76b48c" stroke-width="4.200"/>
</svg>

<div class="a" style="left:3107px;top:396px;width:446px;height:356.500px;border-radius:12px;background:#fff;border:2px solid #c3c5d7;box-shadow:0 12px 26px rgba(60,64,100,.16),0 2px 6px rgba(60,64,100,.07)"></div>
<svg style="left:0;top:0" width="3680" height="2382" viewBox="0 0 3680 2382"><path d="M3497.500 399.500L3515.800 380.300L3534.100 399.500Z" fill="#fff"/><path d="M3498.600 397.200L3515.800 379.900L3533 397.200" fill="none" stroke="#c3c5d7" stroke-width="2.100" stroke-linejoin="miter"/></svg>
<div class="a" style="left:3124px;top:558.500px;width:412px;height:71px;border-radius:9px;background:#e6f3f4"></div>
<div class="a" style="left:3109px;top:645.500px;width:442px;height:2px;background:#d9dbe4"></div>
<div class="t mi" id="m1" style="left:3196.500px;top:435.5px;letter-spacing:-0.7px">Rename</div>
<div class="t mi" id="m2" style="left:3196.500px;top:507.7px;letter-spacing:-0.2px">Edit Threads</div>
<div class="t mi" id="m3" style="left:3196.500px;top:579.1px;letter-spacing:-0.55px">Recalculate</div>
<div class="t mi" id="m4" style="left:3196.500px;top:685.5px;letter-spacing:-0.07px;color:#b15e4f">Delete Report</div>
<svg style="left:0;top:0" width="3680" height="2382" viewBox="0 0 3680 2382" fill="none" stroke-linecap="round" stroke-linejoin="round">
<path d="M3145.200 458L3162.900 440.200L3169.700 447.100L3152.100 464.800H3145.200Z" fill="#4b4e68"/>
<path d="M3165.200 437.700L3167.500 435.500a3 3 0 0 1 4.200 0L3174.500 438.300a3 3 0 0 1 0 4.200L3172.200 444.700Z" fill="#4b4e68"/>
<circle cx="3159.900" cy="521.900" r="13.400" stroke="#4b4e68" stroke-width="3.200"/>
<circle cx="3159.900" cy="521.900" r="6.700" fill="#4b4e68"/>
<path d="M3159.900 504V508.500M3159.900 535.300V539.800M3142 521.900H3146.500M3173.300 521.900H3177.800" stroke="#4b4e68" stroke-width="3.800" stroke-linecap="butt"/>
<path d="M3170.600 587.200A12.600 12.600 0 1 0 3172.800 594.300" stroke="#7ab0b3" stroke-width="3.200"/>
<path d="M3173.300 581.300V590.800H3163.800" stroke="#7ab0b3" stroke-width="3.200"/>
<path d="M3157.500 689.600a3 3 0 0 1 5.200 0L3175.500 710.300a3 3 0 0 1 -2.600 4.500H3147.300a3 3 0 0 1 -2.600 -4.500Z" fill="#b15e4f"/>
<path d="M3160.100 697V705" stroke="#fff" stroke-width="3.600" stroke-linecap="butt"/><circle cx="3160.100" cy="709.400" r="2" fill="#fff"/>
</svg>


</div></div>
</body>
</html>
